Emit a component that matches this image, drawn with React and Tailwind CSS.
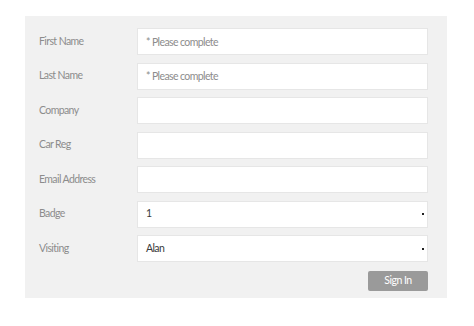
const fields = [
	{ label: "First Name", placeholder: "* Please complete" },
	{ label: "Last Name", placeholder: "* Please complete" },
	{ label: "Company" },
	{ label: "Car Reg" },
	{ label: "Email Address" },
]

const selects = [
	{ label: "Badge", value: "1" },
	{ label: "Visiting", value: "Alan" },
]

const Row = ({ label, children }) => (
	<div className="flex items-center h-[27px]">
		<span className="w-[98px] shrink-0 text-[10.5px] text-[#8c8c8c] tracking-[-0.6px]">{label}</span>
		{children}
	</div>
)

const App = () => {
	return (
		<div className="w-[474px] h-[326px] bg-white pt-[16px] pl-[25px]" style={{ fontFamily: "Lato, 'Liberation Sans', sans-serif" }}>
			<div className="w-[422px] h-[282px] bg-[#f1f1f1] pt-[12px] pl-[14px] pr-[19px] flex flex-col gap-[7.5px]">
				{fields.map((f) => (
					<Row key={f.label} label={f.label}>
						<input
							className="flex-1 h-full bg-white border border-[#e6e6e6] px-[8px] text-[10.5px] text-[#333] tracking-[-0.6px] placeholder:text-[#8c8c8c] outline-none"
							placeholder={f.placeholder}
						/>
					</Row>
				))}
				{selects.map((s) => (
					<Row key={s.label} label={s.label}>
						<div className="flex-1 h-full bg-white border border-[#e6e6e6] pl-[8px] pr-[3px] flex items-center justify-between">
							<span className="text-[10.5px] text-[#3a3a3a] tracking-[-0.6px]">{s.value}</span>
							<span className="w-[2px] h-[2px] bg-[#222]"></span>
						</div>
					</Row>
				))}
				<div className="flex justify-end mt-[1.5px]">
					<button className="w-[60px] h-[20px] bg-[#9a9a9a] rounded-[2px] text-white text-[10.5px] tracking-[-0.5px]">Sign In</button>
				</div>
			</div>
		</div>
	)
}
export default App
